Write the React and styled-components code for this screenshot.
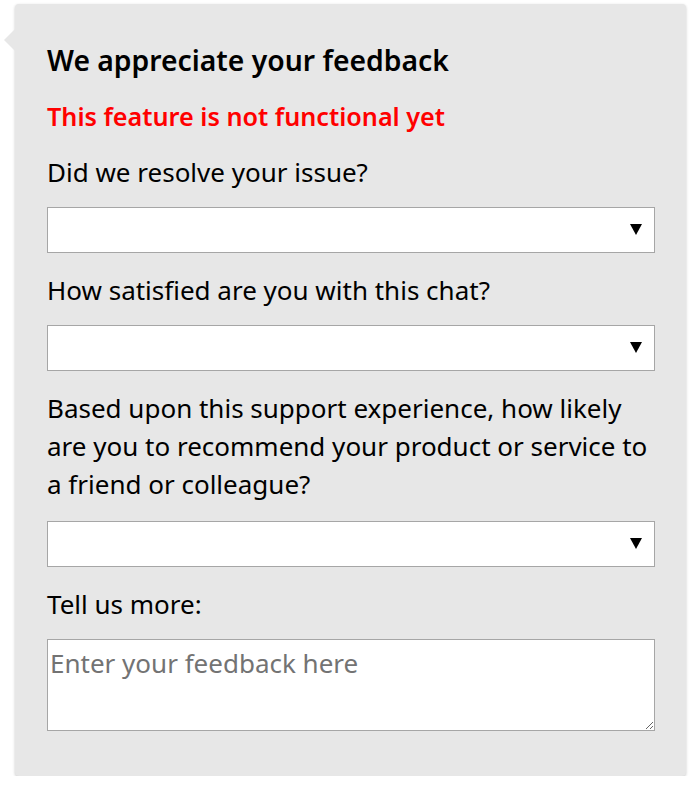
import React from 'react'
import styled, { createGlobalStyle } from 'styled-components'

const GlobalStyle = createGlobalStyle`
  body {
    margin: 0;
    background: #ffffff;
    font-family: 'Noto Sans', 'Open Sans', sans-serif;
  }
`

const Page = styled.div`
  padding: 4px 12px 0 15px;
`

const Panel = styled.form`
  position: relative;
  width: 671px;
  box-sizing: border-box;
  background: #e7e7e7;
  border-radius: 4px;
  box-shadow: 0 1px 3px rgba(0, 0, 0, 0.22);
  padding: 36px 31px 45px 32px;
  display: flex;
  flex-direction: column;

  &::before {
    content: '';
    position: absolute;
    left: -11px;
    top: 25px;
    border-style: solid;
    border-width: 11px 11px 11px 0;
    border-color: transparent #e7e7e7 transparent transparent;
  }
`

const Title = styled.h2`
  margin: 0;
  font-size: 28.3px;
  font-weight: 600;
  line-height: 40px;
  color: #000;
`

const Warning = styled.p`
  margin: 17px 0 0;
  font-size: 25.2px;
  font-weight: 600;
  line-height: 38px;
  color: #ff0000;
`

const Label = styled.label`
  display: block;
  margin: 18px 0 ${p => (p.long ? '18px' : '16px')};
  font-size: 26px;
  line-height: 38px;
  color: #000;
`

const SelectWrap = styled.div`
  position: relative;
  height: 46px;
`

const Select = styled.select`
  appearance: none;
  width: 100%;
  height: 100%;
  margin: 0;
  box-sizing: border-box;
  border: 1px solid #a6a6a6;
  border-radius: 0;
  background: #fff;
  font: inherit;
  font-size: 22px;
  padding: 0 40px 0 8px;
`

const Caret = styled.svg`
  position: absolute;
  right: 13px;
  top: 17px;
  width: 12px;
  height: 11px;
  pointer-events: none;
`

const TextArea = styled.textarea`
  display: block;
  width: 100%;
  height: 92px;
  box-sizing: border-box;
  margin: 0;
  border: 1px solid #a6a6a6;
  border-radius: 0;
  background: #fff;
  padding: 5px 2px;
  font-family: inherit;
  font-size: 26px;
  line-height: 36px;
  color: #000;

  &::placeholder {
    color: #737373;
  }
`

const Dropdown = () => (
  <SelectWrap>
    <Select defaultValue=''>
      <option value='' />
    </Select>
    <Caret viewBox='0 0 12 11'>
      <polygon points='0,0 12,0 6,11' fill='#000' />
    </Caret>
  </SelectWrap>
)

export default function App () {
  return (
    <Page>
      <GlobalStyle />
      <Panel>
        <Title>We appreciate your feedback</Title>
        <Warning>This feature is not functional yet</Warning>
        <Label>Did we resolve your issue?</Label>
        <Dropdown />
        <Label>How satisfied are you with this chat?</Label>
        <Dropdown />
        <Label long>
          Based upon this support experience, how likely are you to recommend
          your product or service to a friend or colleague?
        </Label>
        <Dropdown />
        <Label>Tell us more:</Label>
        <TextArea placeholder='Enter your feedback here' />
      </Panel>
    </Page>
  )
}
